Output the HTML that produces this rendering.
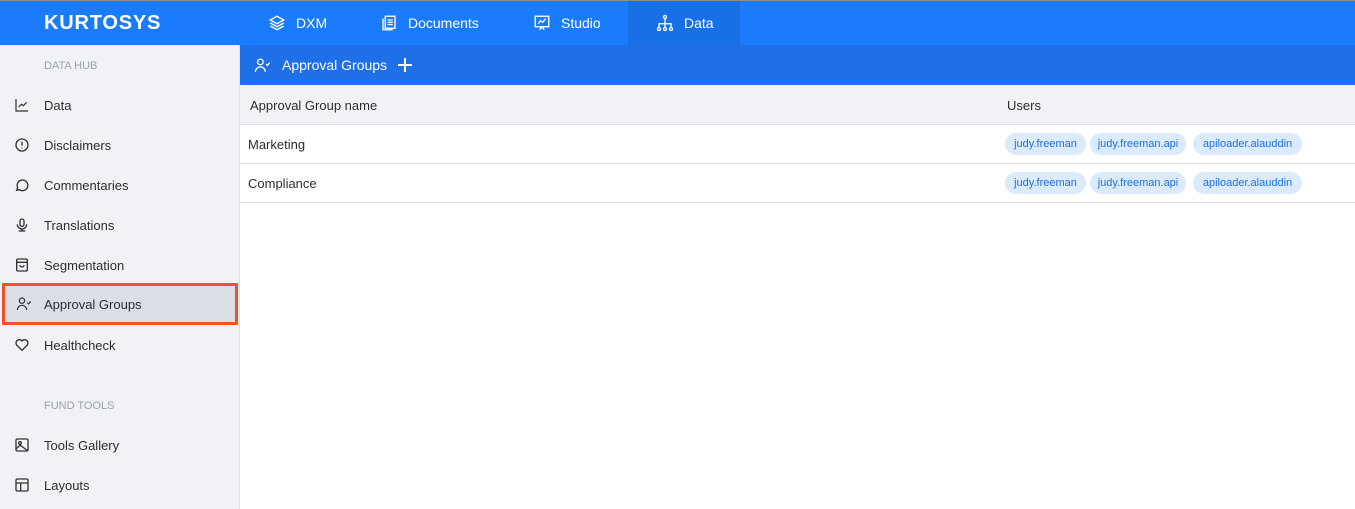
<!DOCTYPE html>
<html><head><style>
*{box-sizing:border-box;margin:0;padding:0}
body{width:1355px;height:509px;overflow:hidden;font-family:"Liberation Sans",sans-serif;background:#fff;position:relative;color:#2a2d34}
.top{position:absolute;left:0;top:0;width:1355px;height:45px;background:#1a7cfc;border-top:1px solid #8a9099}
.logo{position:absolute;left:44px;top:11px;color:#fff;font-weight:bold;font-size:20px;letter-spacing:0.8px}
.tab{position:absolute;top:0;height:44px;color:#fff;font-size:14px;display:flex;align-items:center}
.tab svg{margin-right:10px}
.side{position:absolute;left:0;top:45px;width:240px;height:464px;background:#f1f2f6;border-right:1px solid #dde0e6}
.sec{position:absolute;left:44px;font-size:11px;color:#9ba1ad}
.item{position:absolute;left:0;width:240px;height:40px;display:flex;align-items:center;font-size:13px;color:#2a2d34}
.item svg{position:absolute;left:14px}
.item span{position:absolute;left:44px}
.sel{background:#dadee7;border:3px solid #f5502a;left:2px;width:236px}
.sel svg{left:11px}.sel span{left:39px}
.sub{position:absolute;left:240px;top:45px;width:1115px;height:40px;background:#1f6fe6;color:#fff;font-size:14px}
.th{position:absolute;left:240px;top:85px;width:1115px;height:40px;background:#f1f2f6;border-bottom:1px solid #dde0e6;font-size:13px}
.row{position:absolute;left:240px;width:1115px;height:39px;border-bottom:1px solid #dde0e6;font-size:13px}
.c1{position:absolute;left:8px;top:12px}
.chip{position:absolute;top:8px;height:22px;border-radius:11px;background:#dcebfc;color:#1f6fe6;font-size:11px;line-height:22px;text-align:center}
</style></head><body>
<div class="top">
<div class="logo">KURTOSYS</div>
<div class="tab" style="left:268px"><svg width="18" height="18" viewBox="0 0 24 24" fill="none" stroke="#fff" stroke-width="1.8"><path d="M12 3 3 8l9 5 9-5z"/><path d="M3 12l9 5 9-5"/><path d="M3 16l9 5 9-5"/></svg>DXM</div>
<div class="tab" style="left:380px"><svg width="18" height="18" viewBox="0 0 24 24" fill="none" stroke="#fff" stroke-width="1.8"><rect x="7" y="3" width="13" height="16"/><path d="M4 6v15h13M10 8h7M10 11h7M10 14h7"/></svg>Documents</div>
<div class="tab" style="left:533px"><svg width="18" height="18" viewBox="0 0 24 24" fill="none" stroke="#fff" stroke-width="1.8"><rect x="3" y="3" width="18" height="14"/><path d="M7 13l3-4 3 2 4-5M9 21l3-4 3 4"/></svg>Studio</div>
<div class="tab" style="left:628px;width:112px;background:#1770e8;padding-left:28px"><svg width="18" height="18" viewBox="0 0 24 24" fill="none" stroke="#fff" stroke-width="1.8"><circle cx="12" cy="4" r="2"/><circle cx="4" cy="20" r="2"/><circle cx="12" cy="20" r="2"/><circle cx="20" cy="20" r="2"/><path d="M12 6v12M4 18v-5h16v5"/></svg>Data</div>
</div>
<div class="side">
<div class="sec" style="top:15px">DATA HUB</div>
<div class="item" style="top:40px"><svg width="16" height="16" viewBox="0 0 24 24" fill="none" stroke="#333" stroke-width="1.8"><path d="M3 3v18h18M7 15l4-4 3 2 5-5"/></svg><span>Data</span></div>
<div class="item" style="top:80px"><svg width="16" height="16" viewBox="0 0 24 24" fill="none" stroke="#333" stroke-width="2"><circle cx="12" cy="12" r="9"/><path d="M12 7v6M12 16v1"/></svg><span>Disclaimers</span></div>
<div class="item" style="top:120px"><svg width="16" height="16" viewBox="0 0 24 24" fill="none" stroke="#333" stroke-width="2"><path d="M4 20l1.5-4A8 8 0 1 1 8 19z"/></svg><span>Commentaries</span></div>
<div class="item" style="top:160px"><svg width="16" height="16" viewBox="0 0 24 24" fill="none" stroke="#333" stroke-width="2"><rect x="9" y="3" width="6" height="11" rx="3"/><path d="M5 11a7 7 0 0 0 14 0M12 18v3M7 21h10"/></svg><span>Translations</span></div>
<div class="item" style="top:200px"><svg width="16" height="16" viewBox="0 0 24 24" fill="none" stroke="#333" stroke-width="2"><rect x="4" y="3" width="16" height="18" rx="2"/><path d="M4 8h16M9 12a3 3 0 0 0 6 0"/></svg><span>Segmentation</span></div>
<div class="item sel" style="top:238px;height:42px"><svg width="16" height="16" viewBox="0 0 24 24" fill="none" stroke="#333" stroke-width="1.8"><circle cx="9" cy="7" r="4"/><path d="M2 21a7 7 0 0 1 14 0M17 10l2 2 3-4"/></svg><span>Approval Groups</span></div>
<div class="item" style="top:280px"><svg width="16" height="16" viewBox="0 0 24 24" fill="none" stroke="#333" stroke-width="2"><path d="M12 20 4 12a5 5 0 0 1 8-6 5 5 0 0 1 8 6z"/></svg><span>Healthcheck</span></div>
<div class="sec" style="top:355px">FUND TOOLS</div>
<div class="item" style="top:380px"><svg width="16" height="16" viewBox="0 0 24 24" fill="none" stroke="#333" stroke-width="2"><rect x="3" y="3" width="18" height="18" rx="2"/><circle cx="9" cy="9" r="2"/><path d="M3 18l6-6 12 9"/></svg><span>Tools Gallery</span></div>
<div class="item" style="top:420px"><svg width="16" height="16" viewBox="0 0 24 24" fill="none" stroke="#333" stroke-width="2"><rect x="3" y="3" width="18" height="18" rx="2"/><path d="M3 9h18M10 9v12"/></svg><span>Layouts</span></div>
</div>
<div class="sub"><svg style="position:absolute;left:14px;top:12px" width="17" height="17" viewBox="0 0 24 24" fill="none" stroke="#fff" stroke-width="1.8"><circle cx="9" cy="7" r="4"/><path d="M2 21a7 7 0 0 1 14 0M17 10l2 2 3-4"/></svg><span style="position:absolute;left:42px;top:12px">Approval Groups</span><svg style="position:absolute;left:157px;top:12px" width="16" height="16" viewBox="0 0 16 16" stroke="#fff" stroke-width="2"><path d="M8 1v14M1 8h14"/></svg></div>
<div class="th"><span style="position:absolute;left:10px;top:13px">Approval Group name</span><span style="position:absolute;left:767px;top:13px">Users</span></div>
<div class="row" style="top:125px"><span class="c1">Marketing</span><div class="chip" style="left:765px;width:81px">judy.freeman</div><div class="chip" style="left:850px;width:96px">judy.freeman.api</div><div class="chip" style="left:953px;width:109px">apiloader.alauddin</div></div>
<div class="row" style="top:164px"><span class="c1">Compliance</span><div class="chip" style="left:765px;width:81px">judy.freeman</div><div class="chip" style="left:850px;width:96px">judy.freeman.api</div><div class="chip" style="left:953px;width:109px">apiloader.alauddin</div></div>
</body></html>
